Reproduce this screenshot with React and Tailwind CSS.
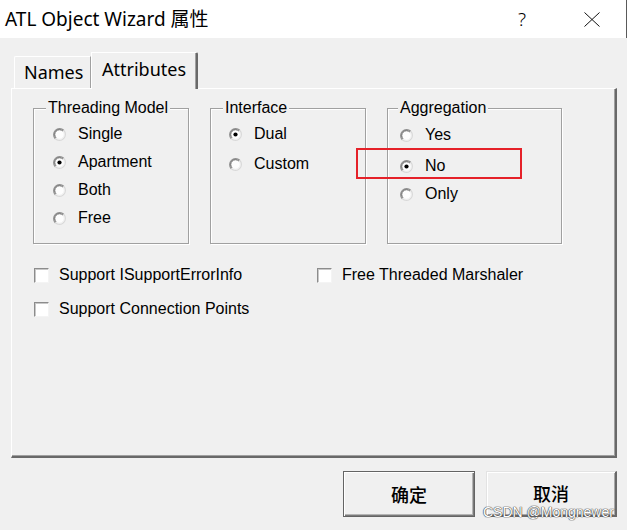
import React from "react";

function Radio({ checked }) {
  return (
    <svg width="13" height="13" viewBox="0 0 13 13" className="shrink-0">
      <circle cx="6.5" cy="6.5" r="5.2" fill="#fdfdfd" />
      <path d="M2.26 10.74 A6 6 0 0 1 10.74 2.26" fill="none" stroke="#8f8f8f" strokeWidth="1.2" />
      <path d="M10.74 2.26 A6 6 0 0 1 2.26 10.74" fill="none" stroke="#d8d8d8" strokeWidth="1.2" />
      <path d="M3.1 9.9 A4.8 4.8 0 0 1 9.9 3.1" fill="none" stroke="#5e5e5e" strokeWidth="1" />
      <path d="M9.9 3.1 A4.8 4.8 0 0 1 3.1 9.9" fill="none" stroke="#ececec" strokeWidth="1" />
      {checked && <circle cx="6.5" cy="6.5" r="2.1" fill="#000" />}
    </svg>
  );
}

function RadioRow({ label, checked, h }) {
  return (
    <div className={"flex items-center " + h}>
      <Radio checked={checked} />
      <span className="ml-[12px]">{label}</span>
    </div>
  );
}

function Check({ label }) {
  return (
    <div className="flex items-center h-[20px]">
      <span className="w-[15px] h-[15px] shrink-0 bg-white border border-t-[#8c8c8c] border-l-[#8c8c8c] border-r-[#f4f4f4] border-b-[#f4f4f4] shadow-[inset_1px_1px_0_#c8c8c8]" />
      <span className="ml-[10px]">{label}</span>
    </div>
  );
}

const groupBox =
  "h-[145px] border border-[#a0a0a0] shadow-[inset_1px_1px_0_#fff,1px_1px_0_#fff]";

export default function App() {
  return (
    <div className="relative w-[627px] h-[530px] overflow-hidden bg-[#f0f0f0] text-black font-['Liberation_Sans',Arial,sans-serif] text-[16px]">
      {/* Title bar */}
      <div className="h-[38px] bg-white flex items-center border-r border-r-[#5a5a5a]">
        <span className="pl-[5px] text-[19px] leading-none font-['Noto_Sans','Noto_Sans_CJK_SC',sans-serif]">
          ATL Object Wizard 属性
        </span>
        <div className="ml-auto flex items-center h-full">
          <span className="w-[70px] text-center text-[19px] leading-none font-['Noto_Sans',sans-serif] font-light">
            ?
          </span>
          <span className="w-[69px] flex justify-center">
            <svg width="16" height="15" viewBox="0 0 16 15">
              <path d="M0.5 0.5 L15.5 14.5 M15.5 0.5 L0.5 14.5" stroke="#111" strokeWidth="1" fill="none" />
            </svg>
          </span>
        </div>
      </div>

      <div className="pl-[11px] pr-[10px]">
        {/* Tabs */}
        <div className="relative z-10 flex items-end h-[36px] mt-[14px] pl-[3px] text-[18px] font-['Noto_Sans',sans-serif]">
          <div className="h-[32px] w-[77px] flex items-center pl-[9px] pb-[1px] border-t border-l border-r border-t-white border-l-white border-r-[#a0a0a0] rounded-tl-[2px]">
            Names
          </div>
          <div className="h-[37px] -mb-px w-[107px] flex items-center pl-[10px] pb-[3px] bg-[#f0f0f0] border-t border-l border-r-2 border-t-white border-l-white border-r-[#696969] shadow-[inset_-1px_0_0_#a0a0a0] rounded-tr-[2px]">
            Attributes
          </div>
        </div>

        {/* Panel */}
        <div className="h-[370px] border-t border-l border-r-2 border-b-2 border-t-white border-l-white border-r-[#696969] border-b-[#696969] shadow-[inset_-1px_-1px_0_#a0a0a0] pt-[10px] pl-[21px]">
          <div className="flex gap-[21px]">
            <fieldset className={groupBox + " w-[156px]"}>
              <legend className="ml-[12px] px-[2px] leading-[18px] bg-[#f0f0f0]">Threading Model</legend>
              <div className="pl-[19px] pt-[3px]">
                <RadioRow label="Single" h="h-[28px]" />
                <RadioRow label="Apartment" checked h="h-[28px]" />
                <RadioRow label="Both" h="h-[28px]" />
                <RadioRow label="Free" h="h-[28px]" />
              </div>
            </fieldset>
            <fieldset className={groupBox + " w-[156px]"}>
              <legend className="ml-[12px] px-[2px] leading-[18px] bg-[#f0f0f0]">Interface</legend>
              <div className="pl-[18px] pt-[2px]">
                <RadioRow label="Dual" checked h="h-[30px]" />
                <RadioRow label="Custom" h="h-[30px]" />
              </div>
            </fieldset>
            <fieldset className={groupBox + " w-[175px]"}>
              <legend className="ml-[10px] px-[2px] leading-[18px] bg-[#f0f0f0]">Aggregation</legend>
              <div className="pl-[12px] pt-[3px]">
                <RadioRow label="Yes" h="h-[30px]" />
                <RadioRow label="No" checked h="h-[32px]" />
                <RadioRow label="Only" h="h-[24px]" />
              </div>
            </fieldset>
          </div>

          <div className="mt-[21px] ml-[1px] grid grid-cols-[283px_1fr] gap-y-[14px]">
            <Check label="Support ISupportErrorInfo" />
            <Check label="Free Threaded Marshaler" />
            <Check label="Support Connection Points" />
          </div>
        </div>

        {/* Buttons */}
        <div className="flex justify-end gap-[11px] mt-[13px] text-[18px] font-medium font-['Noto_Sans_CJK_SC',sans-serif]">
          <button className="w-[132px] h-[46px] flex items-center justify-center bg-[#f0f0f0] border border-[#646464] shadow-[inset_1px_1px_0_#fff,inset_-1px_-1px_0_#7a7a7a,inset_-2px_-2px_0_#b4b4b4]">
            确定
          </button>
          <button className="w-[131px] h-[46px] flex items-center justify-center bg-[#f0f0f0] border-t border-l border-r-2 border-b-2 border-t-[#e3e3e3] border-l-[#e3e3e3] border-r-[#696969] border-b-[#696969] shadow-[inset_1px_1px_0_#fff,inset_-1px_-1px_0_#a8a8a8]">
            取消
          </button>
        </div>
      </div>

      {/* Annotation highlight */}
      <div className="absolute left-[356px] top-[148px] w-[166px] h-[31px] border-2 border-[#e52129]" />

      {/* Watermark */}
      <div className="absolute left-[483px] top-[504px] text-[14px] leading-[16px] text-white [text-shadow:0_0_1px_#444,0_0_1px_#444,0_0_1px_#444]">
        CSDN @Mongnewer
      </div>
    </div>
  );
}
